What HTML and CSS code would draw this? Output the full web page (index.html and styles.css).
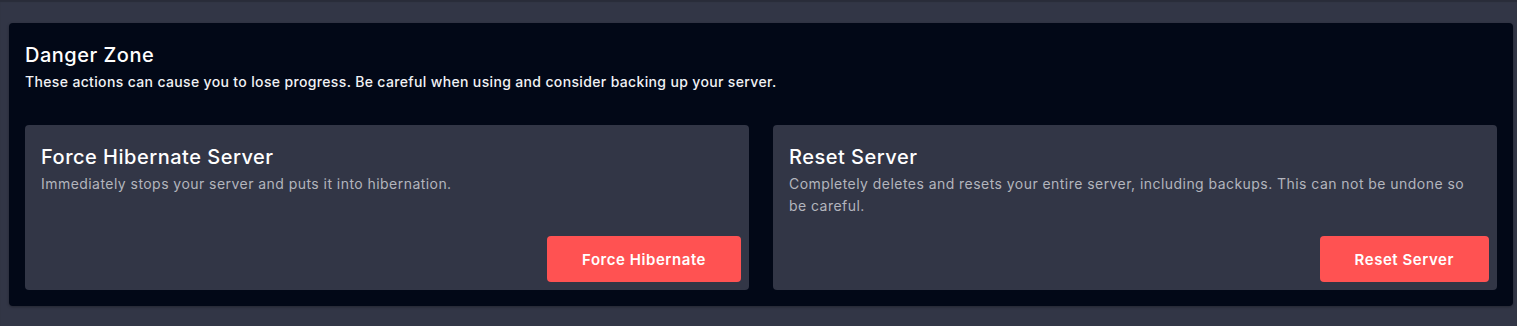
FILE: index.html
```html
<!DOCTYPE html>
<html lang="en">
<head>
    <meta charset="UTF-8">
    <meta name="viewport" content="width=device-width, initial-scale=1.0">
    <title>Danger Zone</title>
    <link rel="stylesheet" href="styles.css">
</head>
<body>
    <section class="danger-zone">
        <h2 class="zone-title">Danger Zone</h2>
        <p class="zone-text">These actions can cause you to lose progress. Be careful when using and consider backing up your server.</p>

        <div class="action-grid">
            <div class="action-card">
                <h3 class="card-title">Force Hibernate Server</h3>
                <p class="card-text">Immediately stops your server and puts it into hibernation.</p>
                <div class="card-actions">
                    <button class="danger-btn">Force Hibernate</button>
                </div>
            </div>
            <div class="action-card">
                <h3 class="card-title">Reset Server</h3>
                <p class="card-text">Completely deletes and resets your entire server, including backups. This can not be undone so be careful.</p>
                <div class="card-actions">
                    <button class="danger-btn">Reset Server</button>
                </div>
            </div>
        </div>
    </section>
</body>
</html>
```

FILE: styles.css
```css
body {
    font-family: 'Inter', 'Open Sans', sans-serif;
    margin: 0;
    padding: 23px 4px 20px 9px;
    background: #323646;
    color: #fff;
    box-shadow: inset 0 2px 1px rgba(0, 0, 0, 0.18);
}
.danger-zone {
    background: #020817;
    border-radius: 4px;
    padding: 18px 16px 16px;
    box-shadow: 0 1px 3px rgba(0, 0, 0, 0.3);
}
.zone-title {
    font-size: 20px;
    font-weight: 500;
    letter-spacing: 0.5px;
    line-height: 28px;
    margin: 0;
}
.zone-text {
    font-size: 14px;
    font-weight: 500;
    letter-spacing: 0.35px;
    line-height: 20px;
    margin: 3px 0 33px;
    color: #f1f2f5;
}
.action-grid {
    display: grid;
    grid-template-columns: 1fr 1fr;
    gap: 24px;
}
.action-card {
    background: #323646;
    border-radius: 4px;
    padding: 18px 16px 8px;
    display: flex;
    flex-direction: column;
}
.card-title {
    font-size: 20px;
    font-weight: 500;
    letter-spacing: 0.5px;
    line-height: 28px;
    margin: 0 0 2px;
}
.card-text {
    font-size: 14px;
    letter-spacing: 0.45px;
    line-height: 22px;
    margin: 0;
    color: #b3b5bd;
}
.card-actions {
    margin-top: auto;
    margin-right: -8px;
    padding-top: 19px;
    display: flex;
    justify-content: flex-end;
}
.danger-btn {
    font-family: inherit;
    font-size: 15px;
    font-weight: 600;
    letter-spacing: 0.55px;
    height: 46px;
    padding: 0 35px;
    background: #ff5252;
    color: #fff;
    border: none;
    border-radius: 4px;
    cursor: pointer;
}
.danger-btn:hover {
    background: #e84848;
}
```
